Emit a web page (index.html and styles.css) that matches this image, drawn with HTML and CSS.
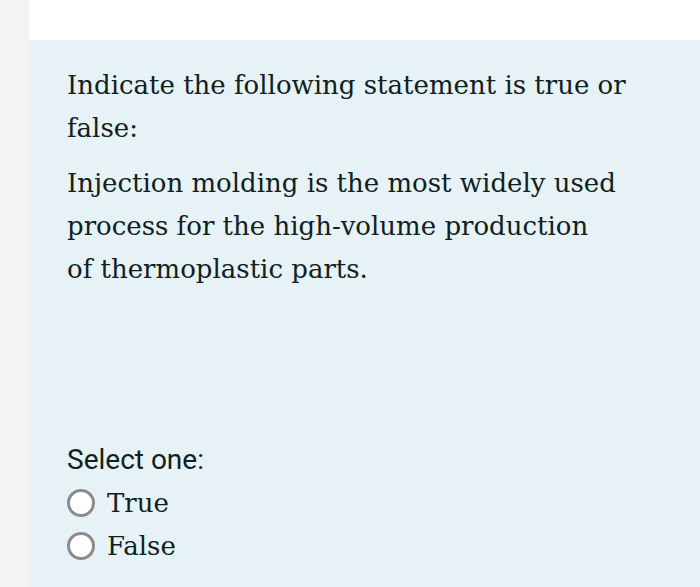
FILE: index.html
```html
<!DOCTYPE html>
<html>
<head>
<meta charset="utf-8">
<link rel="stylesheet" href="styles.css">
</head>
<body>
<div class="page">
  <div class="side"></div>
  <div class="main">
    <div class="topbar"></div>
    <div class="panel">
      <p class="q q-wide">Indicate the following statement is true or false:</p>
      <p class="q">Injection molding is the most widely used process for the high-volume production of thermoplastic parts.</p>
      <div class="answer">
        <div class="prompt">Select one:</div>
        <label class="opt"><span class="radio"></span><span class="lbl">True</span></label>
        <label class="opt"><span class="radio"></span><span class="lbl">False</span></label>
      </div>
    </div>
  </div>
</div>
</body>
</html>
```
FILE: styles.css
```css
html, body { margin: 0; padding: 0; }
body { width: 700px; height: 587px; overflow: hidden; background: #ffffff; }
.page { display: flex; height: 587px; }
.side { width: 29px; background: #f3f3f3; flex: none; }
.main { flex: 1; display: flex; flex-direction: column; }
.topbar { height: 40px; background: #ffffff; flex: none; }
.panel {
  flex: 1;
  background: #e6f2f5;
  padding: 24px 30px 0 38px;
  font-family: "DejaVu Serif", serif;
  color: #112020;
}
.q {
  margin: 0 0 12px 0;
  font-size: 26px;
  line-height: 43px;
  width: 552px;
}
.q-wide { width: 600px; }
.answer { margin-top: 147px; }
.prompt {
  font-family: Roboto, "Noto Sans", sans-serif;
  font-size: 28px;
  line-height: 43px;
}
.opt { display: flex; align-items: center; height: 43px; gap: 12px; }
.radio {
  width: 22px; height: 22px; border-radius: 50%;
  border: 3px solid #8c8c8c; background: #ffffff; flex: none;
}
.lbl { font-size: 26px; }
```
